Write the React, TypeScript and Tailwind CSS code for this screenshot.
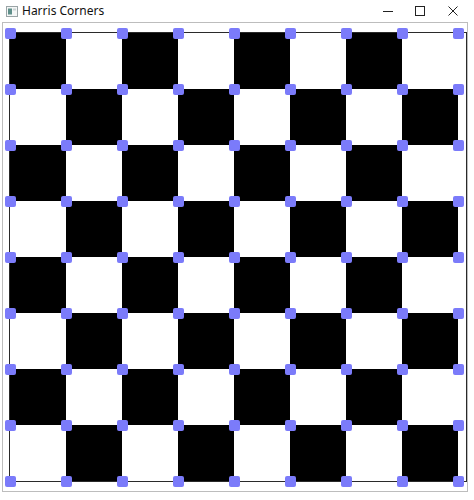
const CELL = 56;
const N = 8;

function TitleIcon() {
  return (
    <svg width="12" height="11" viewBox="0 0 12 11" className="shrink-0">
      <rect x="0.5" y="0.5" width="11" height="10" fill="#f4f6f6" stroke="#9aa4a6" />
      <rect x="2" y="2.5" width="4" height="6" fill="#5f8f8a" />
      <rect x="7" y="2.5" width="3" height="2" fill="#c9d3d3" />
    </svg>
  );
}

function WindowButtons() {
  return (
    <div className="flex h-full items-center pr-[4px]">
      <div className="flex h-full w-[32px] items-center justify-center">
        <svg width="10" height="10" viewBox="0 0 10 10">
          <line x1="0" y1="5.5" x2="10" y2="5.5" stroke="#222" strokeWidth="1" />
        </svg>
      </div>
      <div className="flex h-full w-[32px] items-center justify-center">
        <svg width="10" height="10" viewBox="0 0 10 10">
          <rect x="0.5" y="0.5" width="9" height="9" fill="none" stroke="#222" strokeWidth="1" />
        </svg>
      </div>
      <div className="flex h-full w-[34px] items-center justify-center">
        <svg width="10" height="10" viewBox="0 0 10 10">
          <path d="M0.5 0.5 L9.5 9.5 M9.5 0.5 L0.5 9.5" stroke="#222" strokeWidth="1" />
        </svg>
      </div>
    </div>
  );
}

function Board() {
  const cells = [];
  for (let r = 0; r < N; r++) {
    for (let c = 0; c < N; c++) {
      const dark = (r + c) % 2 === 0;
      cells.push(
        <div key={`${r}-${c}`} className={dark ? 'bg-black' : 'bg-white'} />
      );
    }
  }

  // corner markers at every grid intersection
  const dots = [];
  for (let r = 0; r <= N; r++) {
    for (let c = 0; c <= N; c++) {
      dots.push(
        <div
          key={`d-${r}-${c}`}
          className="absolute h-[11px] w-[11px] rounded-[2px] bg-[#7b7bfa]"
          style={{ left: c * CELL - 5.5, top: r * CELL - 5.5 }}
        />
      );
    }
  }

  return (
    <div className="relative border border-[#2a2a2a]">
      <div className="grid grid-cols-[repeat(8,56px)] grid-rows-[repeat(8,56px)]">
        {cells}
      </div>
      <div className="absolute left-0 top-0">{dots}</div>
    </div>
  );
}

export default function App() {
  return (
    <div className="flex h-[500px] w-[474px] flex-col bg-white font-['Noto_Sans','Open_Sans',sans-serif]">
      <div className="flex h-[22px] items-center justify-between">
        <div className="flex items-center gap-[4px] pl-[6px]">
          <TitleIcon />
          <span className="text-[12px] leading-none text-[#111]">Harris Corners</span>
        </div>
        <WindowButtons />
      </div>
      <div className="mx-[2px] h-[470px] w-[466px] border border-[#bdbdbd] bg-white pl-[6px] pt-[9px]">
        <Board />
      </div>
    </div>
  );
}
